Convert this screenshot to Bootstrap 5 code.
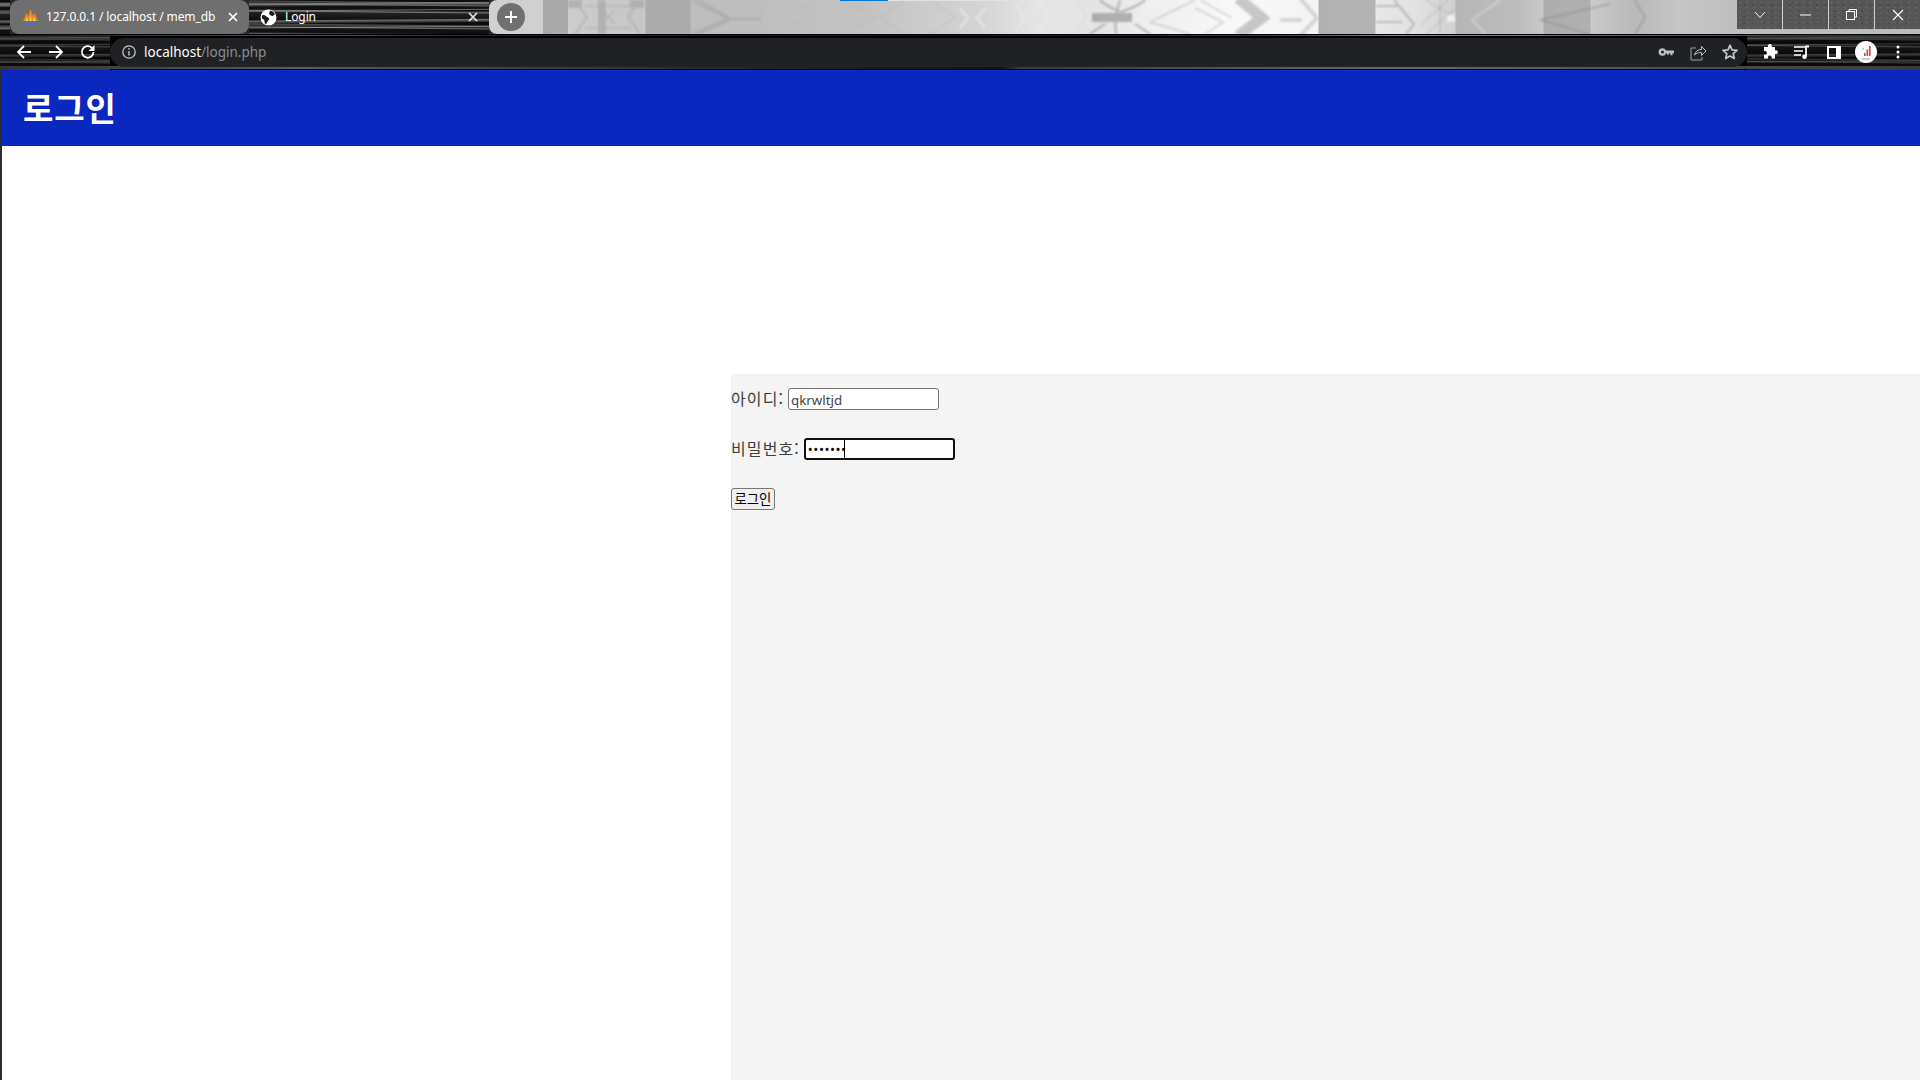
<!DOCTYPE html>
<html lang="ko">
<head>
<meta charset="utf-8">
<title>Login</title>
<link href="https://cdn.jsdelivr.net/npm/bootstrap@5.3.0/dist/css/bootstrap.min.css" rel="stylesheet">
<style>
html,body{height:100%;overflow:hidden}
body{background:#fff;font-family:"Noto Sans","Noto Sans CJK KR",sans-serif;font-size:16px;color:#333}
.app-shell{width:1920px;height:1080px}
.tab-strip{height:34px;position:relative;
 background:linear-gradient(90deg,#2a2a2a 0,#2a2a2a 497px,#d0d0d0 497px,#d0d0d0 543px,#a9a9a9 543px,#a9a9a9 568px,#cdcdcd 568px,#c6c6c6 645px,#ababab 646px,#acacac 690px,#bdbdbd 691px,#c2c2c2 860px,#d4d4d4 980px,#e6e6e6 1040px,#e4e4e4 1100px,#efefef 1150px,#f8f8f8 1235px,#f4f4f4 1318px,#b1b1b1 1319px,#b4b4b4 1375px,#e8e8e8 1376px,#e0e0e0 1420px,#d0d0d0 1455px,#b6b6b6 1456px,#bdbdbd 1520px,#c8c8c8 1543px,#adadad 1544px,#b0b0b0 1590px,#cacaca 1591px,#b9b9b9 1635px,#c6c6c6 1680px,#bebebe 1737px,#bbb 1920px)}
.strip-art{position:absolute;inset:0;width:1920px;height:34px}
.streaks{background-color:#1c1c1c;background-image:
 repeating-linear-gradient(179.6deg,transparent 0,transparent 3px,rgba(170,170,170,.6) 4px,rgba(110,110,110,.45) 6px,transparent 7px,transparent 10px,rgba(210,210,210,.45) 11px,transparent 12px,transparent 17px),
 repeating-linear-gradient(180.5deg,#0c0c0c 0,#0c0c0c 2px,#4a4a4a 3px,#2a2a2a 5px,#6a6a6a 6px,#111 7px,#111 11px,#3a3a3a 12px,#777 13px,#222 14px,#0a0a0a 23px)}
.strip-left{width:10px;height:34px;position:relative}
.tab-item{height:34px;position:relative;color:#fff;font-size:12px;letter-spacing:-.1px}
.tab-active{width:239px;background:#6f6f6f;border-radius:9px}
.tab-idle{width:240px}
.tab-title{white-space:nowrap;overflow:hidden}
.tab-fav{width:17px;height:17px;flex:none}
.tab-gap-a{margin-left:12px;margin-right:7px}
.tab-gap-b{margin-left:11px;margin-right:8px}
.tab-x{width:16px;height:16px;flex:none}
.newtab-zone{width:54px;height:34px;position:relative;background:#d0d0d0;border-radius:8px 0 0 8px;padding-right:10px}
.newtab-dot{width:28px;height:28px;background:#707070;border-radius:50%}
.win-ctrls{width:183px;height:29px;position:relative;background-color:#565656;background-image:radial-gradient(#636363 1px,transparent 1.500px),radial-gradient(#4a4a4a 1px,transparent 1.500px);background-size:7px 5px,9px 6px;background-position:0 0,3px 2px}
.win-btn{width:46px;height:29px;border-left:1px solid #cfcfcf}
.win-btn:first-child{border-left:0;width:45px}
.tool-row{height:36px;background:#000;position:relative}
.tool-edge{position:absolute;left:0;right:0;height:1px}
.tool-top{top:1px;background:linear-gradient(90deg,#111 0,#555 300px,#222 500px,#111 900px,#333 1250px,#8a8a8a 1400px,#555 1700px,#222 1920px)}
.tool-bot{bottom:1px;height:3px;background:linear-gradient(90deg,#333 0,#5a5a5a 300px,#2a2a2a 700px,#111 1000px,#3a3a3a 1020px,#666 1400px,#3a3a3a 1920px)}
.tool-side{position:relative;height:36px}
.side-left{width:110px}
.side-right{width:173px}
.tool-ico{width:32px;height:36px;position:relative;flex:none}
.tool-pad{width:8px;height:36px;flex:none}
.omni-pill{height:29px;width:1637px;background:#202124;border-radius:15px;color:#fff;font-size:13.5px;position:relative;z-index:1;padding-left:9px;padding-right:1px}
.omni-info{width:20px;height:20px;margin-right:5px;flex:none}
.omni-path{color:#8a8d91}
.pill-ico{width:32px;height:29px;flex:none}
.side-streak{position:absolute;inset:0;opacity:.6}
.side-gap{width:7px;flex:none}
.page-wrap{height:1010px;border-left:2px solid #2b2b30}
.login-head{height:76px;background:#0a28bf;padding-left:21px}
.login-head h1{font-size:33px;font-weight:700;color:#fff;margin:0;letter-spacing:.9px;font-family:"Noto Sans CJK KR","Noto Sans",sans-serif}
.login-body{height:934px;padding-top:228px}
.login-panel{margin-left:729px;height:706px;background:#f4f4f4;padding-top:14px;gap:28px}
.field-row{height:22px;line-height:22px;color:#3c3c3c;font-family:"Noto Sans CJK KR","Noto Sans",sans-serif;font-size:16px}
.field-label{margin:0 0 2px;letter-spacing:1.100px}
.form-control.id-box,.form-control.pw-box{width:151px;height:22px;min-height:0;padding:2px 2px 0 2px;font-size:13.33px;line-height:1;border-radius:3px;background:#fff;font-family:"Noto Sans",sans-serif;box-shadow:none;color:#444}
.form-control.id-box{border:1px solid #767676;margin-left:4px}
.form-control.pw-box{border:2px solid #101010;padding:1px 1px 1px 2px;color:#000;letter-spacing:.5px}
.pw-wrap{position:relative;margin-left:4px}
.caret-mark{position:absolute;left:40px;top:2px;width:1px;height:18px;background:#000}
.btn.go-btn{width:44px;height:22px;padding:0;font-size:13.33px;line-height:20px;border:1px solid #767676;border-radius:3px;background:#efefef;color:#000;font-family:"Noto Sans CJK KR",sans-serif}
</style>
</head>
<body class="m-0">
<div class="app-shell d-flex flex-column">
 <div class="tab-strip d-flex flex-shrink-0">
  <svg class="strip-art" viewBox="0 0 1920 34" aria-hidden="true" fill="none">
   <defs><filter id="soft"><feGaussianBlur stdDeviation="1"/></filter></defs>
   <g filter="url(#soft)" opacity=".6">
    <path d="M575 0l12 17-12 17M640 0l-12 17 12 17" stroke="#a8a8a8" stroke-width="2"/>
    <path d="M585 6h46M585 28h46M601 10l7 7-7 7M615 10l-7 7 7 7" stroke="#b0b0b0" stroke-width="2"/>
    <rect x="598" y="0" width="8" height="34" fill="#a2a2a2"/>
    <rect x="568" y="0" width="14" height="8" fill="#a2a2a2"/>
    <rect x="630" y="0" width="14" height="8" fill="#a2a2a2"/>
    <path d="M692 0l36 19-36 15M698 0l34 19-34 15" stroke="#a4a4a4" stroke-width="2"/>
    <path d="M728 19h34" stroke="#a8a8a8" stroke-width="3"/>
    <path d="M760 0v34M815 0l-30 17 30 17M845 0l30 17-30 17M905 0l-25 17 25 17M930 0l25 17-25 17" stroke="#b4b4b4"/>
    <path d="M960 8l8 10-8 10M985 8l-8 10 8 10" stroke="#f6f6f6" stroke-width="2"/>
    <path d="M1015 4l10 14-10 14" stroke="#efefef" stroke-width="2"/>
    <path d="M1050 0l-12 17 12 17M1075 0l12 17-12 17" stroke="#d0d0d0"/>
    <path d="M1092 13h40v9h-40z" fill="#8a8a8a"/>
    <path d="M1120 0c-3 10-6 20-4 34M1100 0c6 6 12 8 20 12M1145 0c-6 6-14 8-24 12M1135 24l15 10M1105 24l-15 10" stroke="#8a8a8a" stroke-width="2"/>
    <path d="M1150 22l45-22M1150 22l40 12M1195 8l28 14-18 12M1200 0l32 18" stroke="#c4c4c4" stroke-width="2"/>
    <path d="M1238 -2l24 20-24 18" stroke="#a8a8a8" stroke-width="11"/>
    <path d="M1280 20h22M1300 -2l17 20-17 18" stroke="#c0c0c0" stroke-width="4"/>
    <path d="M1394 0l20 24-8 10M1376 6h22M1376 22h26" stroke="#a0a0a0" stroke-width="2"/>
    <path d="M1426 0l34 20M1448 0l-28 26M1440 0v34M1426 34l30-26" stroke="#a0a0a0"/>
    <rect x="1447" y="15" width="8" height="7" fill="#fff"/>
    <path d="M1500 0l-28 20 14 14" stroke="#dcdcdc" stroke-width="2"/>
    <path d="M1540 20l70-16M1540 20l50 14M1635 0l10 17-10 17" stroke="#8c8c8c" stroke-width="1.500"/>
   </g>
   <rect x="840" y="0" width="48" height="1" fill="#0078d7"/>
   <rect x="888" y="0" width="134" height="1" fill="#e2e2e2"/>
  </svg>
  <div class="strip-left streaks"></div>
  <div class="tab-item tab-active d-flex align-items-center">
   <svg class="tab-fav tab-gap-a" viewBox="0 0 17 17"><path d="M1 12L4.500 4l1.500 3L8.500 0 11 7l1.500-3L16 12z" fill="#e58a1e"/><path d="M3.500 12l1.500-4 1 4zM7.500 12l1-6 1 6zM11 12l1-4 1.500 4z" fill="#ffd070"/><rect x="1" y="12" width="15" height="4" fill="#5a6fa8"/></svg>
   <span class="tab-title flex-grow-1">127.0.0.1 / localhost / mem_db</span>
   <svg class="tab-x me-2" viewBox="0 0 16 16"><path d="M4 4l8 8M12 4l-8 8" stroke="#fff" stroke-width="1.700"/></svg>
  </div>
  <div class="tab-item tab-idle streaks d-flex align-items-center">
   <svg class="tab-fav tab-gap-b" viewBox="0 0 16 16"><circle cx="8" cy="8" r="7.500" fill="#fff"/><path d="M9.500 1.500c2 .3 3.800 1.700 4.500 3.500l-2 1.500-2-.5-1.500-1.500zM2 6c1-.5 2.500-.5 3.500.5s2.500 1 3 2.500-1 2-1.500 3-1 2.500-2 2-.5-2.500-1-3.500S2 9.500 1.700 8.500z" fill="#1c1c1c"/></svg>
   <span class="tab-title flex-grow-1">Login</span>
   <svg class="tab-x me-2" viewBox="0 0 16 16"><path d="M4 4l8 8M12 4l-8 8" stroke="#e8e8e8" stroke-width="1.700"/></svg>
  </div>
  <div class="newtab-zone d-flex align-items-center justify-content-center">
   <div class="newtab-dot d-flex align-items-center justify-content-center">
    <svg width="14" height="14" viewBox="0 0 14 14"><path d="M7 1v12M1 7h12" stroke="#fff" stroke-width="2"/></svg>
   </div>
  </div>
  <div class="flex-grow-1"></div>
  <div class="win-ctrls d-flex">
   <div class="win-btn d-flex align-items-center justify-content-center"><svg width="12" height="8" viewBox="0 0 12 8" fill="none"><path d="M1 1l5 5.500L11 1" stroke="#f0f0f0"/></svg></div>
   <div class="win-btn d-flex align-items-center justify-content-center"><svg width="11" height="2" viewBox="0 0 11 2"><path d="M0 1h11" stroke="#fff" stroke-width="1"/></svg></div>
   <div class="win-btn d-flex align-items-center justify-content-center"><svg width="11" height="11" viewBox="0 0 11 11" fill="none"><path d="M3 2.500V.5h7.500V8H8.500" stroke="#fff"/><rect x=".5" y="2.500" width="8" height="8" stroke="#fff"/></svg></div>
   <div class="win-btn d-flex align-items-center justify-content-center"><svg width="12" height="12" viewBox="0 0 12 12" fill="none"><path d="M1 1l10 10M11 1L1 11" stroke="#fff" stroke-width="1.100"/></svg></div>
  </div>
 </div>

 <div class="tool-row d-flex align-items-center flex-shrink-0">
  <div class="tool-side side-left d-flex">
   <div class="side-streak streaks"></div>
   <div class="tool-pad"></div>
   <div class="tool-ico d-flex align-items-center justify-content-center"><svg width="16" height="16" viewBox="0 0 16 16" fill="none"><path d="M15 8H2M8 2L2 8l6 6" stroke="#fff" stroke-width="1.800"/></svg></div>
   <div class="tool-ico d-flex align-items-center justify-content-center"><svg width="16" height="16" viewBox="0 0 16 16" fill="none"><path d="M1 8h13M8 2l6 6-6 6" stroke="#fff" stroke-width="1.800"/></svg></div>
   <div class="tool-ico d-flex align-items-center justify-content-center"><svg width="16" height="16" viewBox="0 0 16 16" fill="none"><path d="M13.500 8A5.800 5.800 0 1 1 11.800 3.800" stroke="#fff" stroke-width="1.800"/><path d="M14.500 1v6h-6z" fill="#fff"/></svg></div>
  </div>
  <div class="omni-pill d-flex align-items-center">
   <svg class="omni-info" viewBox="0 0 20 20" fill="none"><circle cx="10" cy="10" r="6.200" stroke="#c4c7c5" stroke-width="1.300"/><path d="M10 9v4.500" stroke="#c4c7c5" stroke-width="1.400"/><circle cx="10" cy="6.800" r=".9" fill="#c4c7c5"/></svg>
   <span class="omni-url">localhost<span class="omni-path">/login.php</span></span>
   <div class="flex-grow-1"></div>
   <div class="pill-ico d-flex align-items-center justify-content-center"><svg width="16" height="16" viewBox="0 0 16 16"><path d="M4.500 4.200a3.800 3.800 0 0 1 3.500 2.300h8v2.800h-1.500v2h-2.200v-2H11v1.200H8.900v-1.200H8a3.800 3.800 0 1 1-3.500-5.100zm0 2.300a1.500 1.500 0 1 0 0 3 1.500 1.500 0 0 0 0-3z" fill="#bdc1c6" fill-rule="evenodd"/></svg></div>
   <div class="pill-ico d-flex align-items-center justify-content-center"><svg width="18" height="18" viewBox="0 0 18 18" fill="none"><path d="M7 5H2v12h11v-3" stroke="#9aa0a6"/><path d="M5.500 12c.5-3.500 3.500-5.500 7-5.500V3.500L17 8l-4.500 4.500V9.500c-3 0-5 .5-7 2.500z" stroke="#bdc1c6"/></svg></div>
   <div class="pill-ico d-flex align-items-center justify-content-center"><svg width="18" height="18" viewBox="0 0 18 18" fill="none"><path d="M9 2.200l2 4.600 5 .5-3.800 3.300 1.100 4.900L9 13l-4.300 2.500 1.100-4.900L2 7.300l5-.5z" stroke="#c4c7c5" stroke-width="1.700" stroke-linejoin="round"/></svg></div>
  </div>
  <div class="tool-side side-right d-flex">
   <div class="side-streak streaks"></div>
   <div class="side-gap"></div>
   <div class="tool-ico d-flex align-items-center justify-content-center"><svg width="16" height="16" viewBox="0 0 16 16"><path d="M6 1.500a2 2 0 0 1 3.800 0c.1.600 0 1-.2 1.500H13v3.500c.5-.3 1-.4 1.500-.2a2 2 0 0 1 0 3.800c-.5.100-1 0-1.500-.3V14.500H9.500c.3-.5.400-1 .2-1.500a2 2 0 0 0-3.800 0c-.1.500 0 1 .2 1.500H2v-4c.5.300 1 .4 1.500.3a2 2 0 0 0 0-3.800C3 6.800 2.500 6.900 2 7.200V3h4.200C6 2.500 5.900 2 6 1.500z" fill="#fff"/></svg></div>
   <div class="tool-ico d-flex align-items-center justify-content-center"><svg width="16" height="16" viewBox="0 0 16 16" fill="none"><path d="M0 3h11M0 7h9M0 11h7" stroke="#fff" stroke-width="1.500"/><path d="M12 12.500V2.500h3" stroke="#fff" stroke-width="1.800"/><circle cx="10.500" cy="12.800" r="2.300" fill="#fff"/></svg></div>
   <div class="tool-ico d-flex align-items-center justify-content-center"><svg width="14" height="13" viewBox="0 0 14 13"><path d="M0 0h14v13H0zM2 2v9h7V2z" fill="#fff" fill-rule="evenodd"/></svg></div>
   <div class="tool-ico d-flex align-items-center justify-content-center"><svg width="22" height="22" viewBox="0 0 22 22"><circle cx="11" cy="11" r="11" fill="#fff"/><path d="M9 15h1.600v-3H9zM11.500 15h1.600V8.500h-1.600zM14 15h1.600V5H14z" fill="#e33c3c"/><path d="M7 18h8" stroke="#999"/><path d="M7 9l2-2" stroke="#e89090"/></svg></div>
   <div class="tool-ico d-flex align-items-center justify-content-center"><svg width="4" height="14" viewBox="0 0 4 14"><circle cx="2" cy="2" r="1.500" fill="#fff"/><circle cx="2" cy="7" r="1.500" fill="#fff"/><circle cx="2" cy="12" r="1.500" fill="#fff"/></svg></div>
  </div>
  <div class="tool-edge tool-top"></div>
  <div class="tool-edge tool-bot"></div>
 </div>

 <div class="page-wrap">
  <header class="login-head d-flex align-items-center"><h1>로그인</h1></header>
  <main class="login-body">
   <form class="login-panel d-flex flex-column align-items-start" onsubmit="return false">
    <div class="field-row d-flex align-items-center">
     <label class="field-label" for="uid">아이디:</label>
     <input id="uid" class="form-control id-box" type="text" value="qkrwltjd">
    </div>
    <div class="field-row d-flex align-items-center">
     <label class="field-label" for="upw">비밀번호:</label>
     <div class="pw-wrap">
      <input id="upw" class="form-control pw-box" type="password" value="1234567">
      <span class="caret-mark"></span>
     </div>
    </div>
    <button class="btn go-btn" type="submit">로그인</button>
   </form>
  </main>
 </div>
</div>
<script src="https://cdn.jsdelivr.net/npm/bootstrap@5.3.0/dist/js/bootstrap.bundle.min.js"></script>
</body>
</html>
